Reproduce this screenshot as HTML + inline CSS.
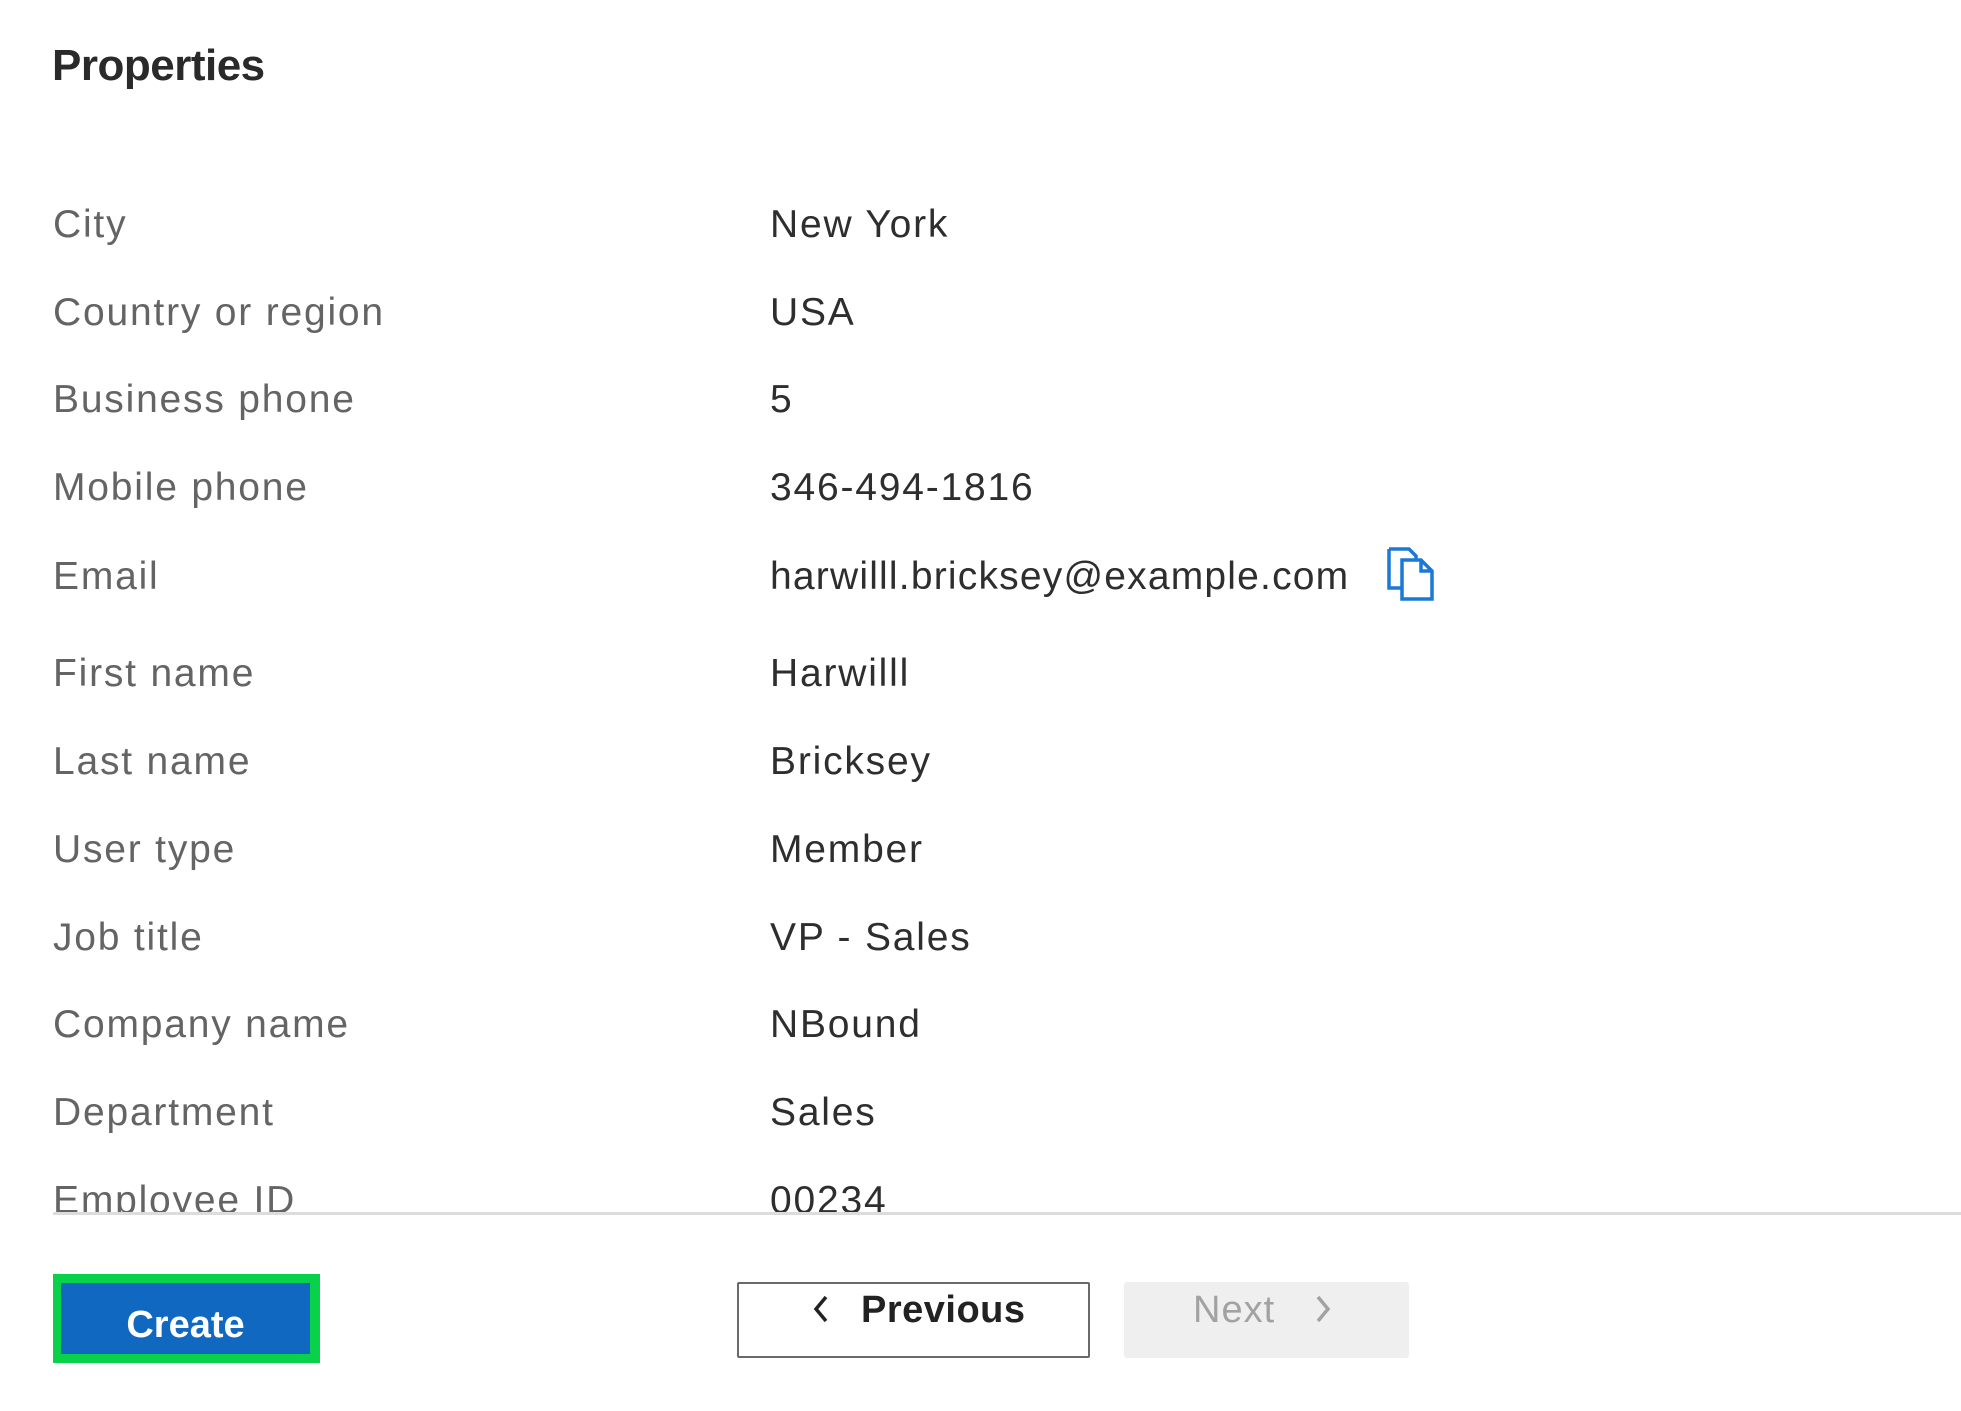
<!DOCTYPE html>
<html><head><meta charset="utf-8"><style>
html,body{margin:0;padding:0;background:#fff;}
body{width:1961px;height:1411px;position:relative;overflow:hidden;font-family:"Liberation Sans",sans-serif;}
.t{position:absolute;font-size:39px;line-height:39px;white-space:nowrap;letter-spacing:1.8px;}
.l{left:53px;color:#646464;}
.v{left:770px;color:#2e2e2e;}
#clip{position:absolute;left:0;top:0;width:1961px;height:1212px;overflow:hidden;}
</style></head><body>
<div style="position:absolute;left:0;top:1216px;width:1961px;height:195px;background:radial-gradient(ellipse 1500px 230px at 1450px 1430px,#d8d8d8 0%,#ececec 45%,#fff 85%);"></div>
<div class="t" style="left:52px;top:44px;font-size:44px;line-height:44px;font-weight:bold;color:#2a2a2a;letter-spacing:-0.5px;">Properties</div>
<div id="clip">
<div class="t l" style="top:205px">City</div><div class="t v" style="top:205px">New York</div>
<div class="t l" style="top:293px">Country or region</div><div class="t v" style="top:293px">USA</div>
<div class="t l" style="top:380px">Business phone</div><div class="t v" style="top:380px">5</div>
<div class="t l" style="top:468px">Mobile phone</div><div class="t v" style="top:468px">346-494-1816</div>
<div class="t l" style="top:557px">Email</div><div class="t v" style="top:557px;letter-spacing:1.2px">harwilll.bricksey@example.com</div>
<div class="t l" style="top:654px">First name</div><div class="t v" style="top:654px">Harwilll</div>
<div class="t l" style="top:742px">Last name</div><div class="t v" style="top:742px">Bricksey</div>
<div class="t l" style="top:830px">User type</div><div class="t v" style="top:830px">Member</div>
<div class="t l" style="top:918px">Job title</div><div class="t v" style="top:918px">VP - Sales</div>
<div class="t l" style="top:1005px">Company name</div><div class="t v" style="top:1005px">NBound</div>
<div class="t l" style="top:1093px">Department</div><div class="t v" style="top:1093px">Sales</div>
<div class="t l" style="top:1181px">Employee ID</div><div class="t v" style="top:1181px">00234</div>
</div>
<svg style="position:absolute;left:1386px;top:546px" width="50" height="56" viewBox="0 0 50 56">
<path d="M3 3 H23 L30 10 V14 M3 3 V42 H15" fill="none" stroke="#1a78d6" stroke-width="3.5"/>
<path d="M16 14 H35 L46 25 V53 H16 Z M35 14 V25 H46" fill="#fff" stroke="#1a78d6" stroke-width="3.5" stroke-linejoin="miter"/>
</svg>
<div style="position:absolute;left:53px;top:1212px;width:1908px;height:3px;background:#dcdcdc;"></div>
<div style="position:absolute;left:53px;top:1274px;width:267px;height:89px;background:#0ad14a;"></div>
<div style="position:absolute;left:61px;top:1283px;width:249px;height:71px;background:#1168c1;color:#fff;font-size:38px;font-weight:bold;text-align:center;line-height:84px;letter-spacing:0px;">Create</div>
<div style="position:absolute;left:737px;top:1282px;width:349px;height:72px;border:2px solid #6a6a6a;border-radius:2px;background:#fff;"></div>
<svg style="position:absolute;left:811px;top:1294px" width="20" height="32" viewBox="0 0 20 32"><path d="M15 3 L5 15 L15 27" fill="none" stroke="#222" stroke-width="3.5"/></svg>
<div class="t" style="left:861px;top:1291px;font-weight:bold;color:#222;font-size:38px;letter-spacing:0.5px;">Previous</div>
<div style="position:absolute;left:1124px;top:1282px;width:285px;height:76px;background:#efefef;border-radius:3px;"></div>
<div class="t" style="left:1193px;top:1291px;color:#a2a2a2;font-size:38px;letter-spacing:1px;">Next</div>
<svg style="position:absolute;left:1313px;top:1294px" width="20" height="32" viewBox="0 0 20 32"><path d="M5 3 L15 15 L5 27" fill="none" stroke="#a2a2a2" stroke-width="3.5"/></svg>
</body></html>
